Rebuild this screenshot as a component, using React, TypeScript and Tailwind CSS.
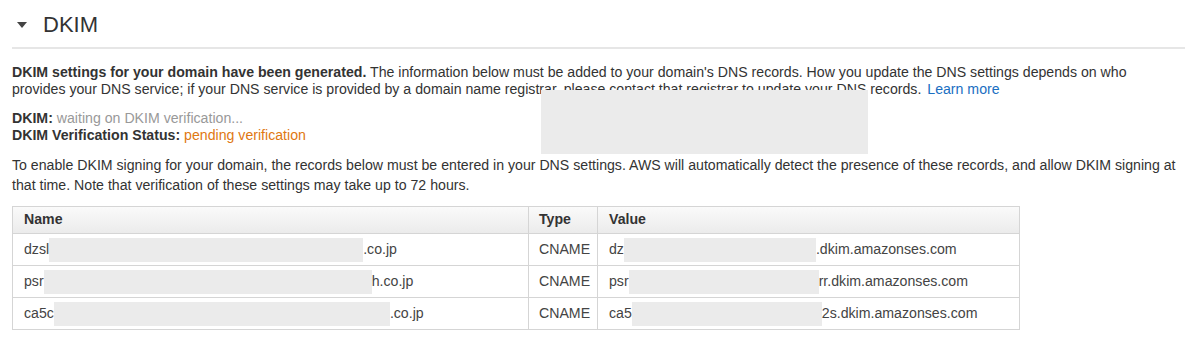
import React from 'react';

interface DkimRecord {
  namePrefix: string;
  nameMask: number;
  nameSuffix: string;
  valuePrefix: string;
  valueMask: number;
  valueSuffix: string;
}

const records: DkimRecord[] = [
  { namePrefix: 'dzsl', nameMask: 314, nameSuffix: '.co.jp', valuePrefix: 'dz', valueMask: 192, valueSuffix: '.dkim.amazonses.com' },
  { namePrefix: 'psr', nameMask: 328, nameSuffix: 'h.co.jp', valuePrefix: 'psr', valueMask: 190, valueSuffix: 'rr.dkim.amazonses.com' },
  { namePrefix: 'ca5c', nameMask: 336, nameSuffix: '.co.jp', valuePrefix: 'ca5', valueMask: 190, valueSuffix: '2s.dkim.amazonses.com' },
];

function Mask({ width }: { width: number }) {
  // redaction block drawn over the hidden part of the record
  return <span className="inline-block h-[24px] bg-[#ebebeb] shrink-0" style={{ width }} />;
}

export default function App() {
  return (
    <div className="bg-white w-[1200px] h-[343px] px-3 text-[14.15px] text-[#333] font-['Liberation_Sans',Arial,sans-serif]">
      {/* Section header */}
      <div className="flex items-center h-[47px] pt-[3px]">
        <span className="ml-[5px] w-0 h-0 border-l-[5px] border-r-[5px] border-t-[6px] border-l-transparent border-r-transparent border-t-[#444]" />
        <h2 className="ml-[16px] text-[22px] leading-none text-[#333]">DKIM</h2>
      </div>
      <div className="h-[2px] w-[1173px] bg-[#e6e6e6]" />

      <div className="relative">
        <p className="mt-[15px] leading-[17px] whitespace-nowrap">
          <b>DKIM settings for your domain have been generated.</b> The information below must be added to your domain's DNS records. How you update the DNS settings depends on who
          <br />
          provides your DNS service; if your DNS service is provided by a domain name registrar, please contact that registrar to update your DNS records.{' '}
          <a className="ml-[2px] text-[#1a6fc2]">Learn more</a>
        </p>

        <div className="mt-[12px] leading-[17px]">
          <div>
            <b>DKIM:</b> <span className="text-[#999]">waiting on DKIM verification...</span>
          </div>
          <div>
            <b>DKIM Verification Status:</b> <span className="text-[#e07812]">pending verification</span>
          </div>
        </div>

        {/* redacted block overlapping the text */}
        <div className="absolute left-[529px] top-[26px] w-[327px] h-[64px] bg-[#ebebeb]" />

        <p className="mt-[11px] leading-[20px] whitespace-nowrap">
          To enable DKIM signing for your domain, the records below must be entered in your DNS settings. AWS will automatically detect the presence of these records, and allow DKIM signing at
          <br />
          that time. Note that verification of these settings may take up to 72 hours.
        </p>
      </div>

      <table className="mt-[11px] w-[1008px] border-collapse text-[#444]">
        <thead>
          <tr className="h-[27px] bg-gradient-to-b from-[#fafafa] to-[#ebebeb] text-[#333]">
            <th className="w-[516px] border-l border-t border-b border-[#d5d5d5] pl-[11px] text-left font-bold">Name</th>
            <th className="w-[69px] border-l border-t border-b border-[#d5d5d5] pl-[10px] text-left font-bold">Type</th>
            <th className="border-l border-r border-t border-b border-[#d5d5d5] pl-[11px] text-left font-bold">Value</th>
          </tr>
        </thead>
        <tbody>
          {records.map((r, i) => (
            <tr key={i} className="h-[32px]">
              <td className="border border-[#d5d5d5] pl-[11px]">
                <div className="flex items-center">
                  <span>{r.namePrefix}</span>
                  <Mask width={r.nameMask} />
                  <span>{r.nameSuffix}</span>
                </div>
              </td>
              <td className="border border-[#d5d5d5] pl-[10px]">CNAME</td>
              <td className="border border-[#d5d5d5] pl-[11px]">
                <div className="flex items-center">
                  <span>{r.valuePrefix}</span>
                  <Mask width={r.valueMask} />
                  <span>{r.valueSuffix}</span>
                </div>
              </td>
            </tr>
          ))}
        </tbody>
      </table>
    </div>
  );
}
